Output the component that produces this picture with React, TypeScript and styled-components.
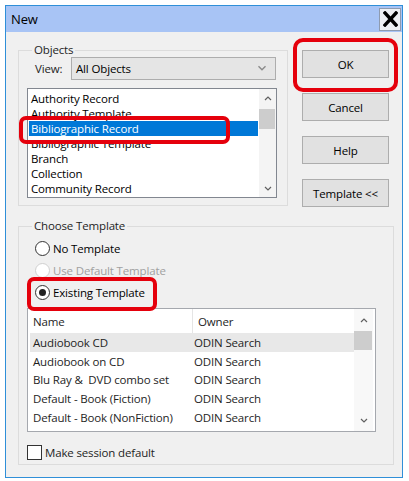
import React from 'react'
import styled, { createGlobalStyle } from 'styled-components'

const objects = [
    'Authority Record',
    'Authority Template',
    'Bibliographic Record',
    'Bibliographic Template',
    'Branch',
    'Collection',
    'Community Record',
]

const templates = [
    { name: 'Audiobook CD', owner: 'ODIN Search' },
    { name: 'Audiobook on CD', owner: 'ODIN Search' },
    { name: 'Blu Ray &  DVD combo set', owner: 'ODIN Search' },
    { name: 'Default - Book (Fiction)', owner: 'ODIN Search' },
    { name: 'Default - Book (NonFiction)', owner: 'ODIN Search' },
    { name: 'Default - Audiobook', owner: 'ODIN Search' },
]

const Chevron = ({ up, color = '#606060', w = 8 }: { up?: boolean; color?: string; w?: number }) => (
    <svg width={w} height={w / 2 + 2} viewBox="0 0 8 6">
        <polyline points={up ? '1,5 4,2 7,5' : '1,1 4,4 7,1'} fill="none" stroke={color} strokeWidth="1.2" />
    </svg>
)

const App = () => {
    return (
        <>
            <GlobalStyle />
            <Page>
                <Dialog>
                    <TitleBar>
                        <Title>New</Title>
                        <CloseButton>
                            <svg width="15" height="16" viewBox="0 0 15 16">
                                <path d="M2 2 L13 14 M13 2 L2 14" stroke="#000" strokeWidth="3.4" strokeLinecap="square" />
                            </svg>
                        </CloseButton>
                    </TitleBar>
                    <Body>
                        <TopRow>
                            <Group $width={270}>
                                <Legend>Objects</Legend>
                                <ViewRow>
                                    <ViewLabel>View:</ViewLabel>
                                    <Combo>
                                        <span>All Objects</span>
                                        <Chevron color="#8a8a8a" w={10} />
                                    </Combo>
                                </ViewRow>
                                <ListBox>
                                    <ListItems>
                                        {objects.map((o, i) => (
                                            <ListItem key={o} $selected={i === 2}>
                                                {o}
                                            </ListItem>
                                        ))}
                                    </ListItems>
                                    <ScrollBar>
                                        <ArrowCell>
                                            <Chevron up />
                                        </ArrowCell>
                                        <Thumb $top={3} $height={20} />
                                        <Spacer />
                                        <ArrowCell>
                                            <Chevron />
                                        </ArrowCell>
                                    </ScrollBar>
                                    <Highlight $left={-9} $top={27} $width={211} $height={28} $radius={7} />
                                </ListBox>
                            </Group>
                            <Buttons>
                                <Button>OK</Button>
                                <Button>Cancel</Button>
                                <Button>Help</Button>
                                <Button>Template &lt;&lt;</Button>
                                <Highlight $left={-9} $top={-12} $width={105} $height={54} $radius={10} />
                            </Buttons>
                        </TopRow>
                        <Group $width={376} $spaced>
                            <Legend>Choose Template</Legend>
                            <RadioRow>
                                <Radio />
                                <span>No Template</span>
                            </RadioRow>
                            <RadioRow $disabled>
                                <Radio $disabled />
                                <span>Use Default Template</span>
                            </RadioRow>
                            <RadioRow>
                                <Radio $checked />
                                <span>Existing Template</span>
                                <Highlight $left={0} $top={-4} $width={130} $height={34} $radius={7} />
                            </RadioRow>
                            <Table>
                                <TableArea>
                                    <HeaderRow>
                                        <HeadCell $first>Name</HeadCell>
                                        <HeadCell>Owner</HeadCell>
                                    </HeaderRow>
                                    {templates.map((t, i) => (
                                        <DataRow key={t.name} $hot={i === 0}>
                                            <NameCell>{t.name}</NameCell>
                                            <span>{t.owner}</span>
                                        </DataRow>
                                    ))}
                                </TableArea>
                                <TableScroll>
                                    <ArrowCell $h={22}>
                                        <Chevron up />
                                    </ArrowCell>
                                    <Thumb $top={0} $height={19} />
                                    <Spacer />
                                    <ArrowCell $h={20}>
                                        <Chevron />
                                    </ArrowCell>
                                </TableScroll>
                            </Table>
                            <CheckRow>
                                <CheckBox />
                                <span>Make session default</span>
                            </CheckRow>
                        </Group>
                    </Body>
                </Dialog>
            </Page>
        </>
    )
}

export default App

const GlobalStyle = createGlobalStyle`
    html, body {
        margin: 0;
        padding: 0;
        background: #ffffff;
    }
    body {
        font-family: "Open Sans", "Noto Sans", sans-serif;
        font-size: 11.5px;
        letter-spacing: -0.15px;
        color: #1a1a1a;
    }
`
const Page = styled.div`
    width: 409px;
    height: 481px;
    padding: 5px 0 0 5px;
    box-sizing: border-box;
`
const Dialog = styled.div`
    width: 398px;
    height: 473px;
    box-sizing: border-box;
    border: 1px solid #2f8fd8;
    background: #f0f0f0;
    display: flex;
    flex-direction: column;
`
const TitleBar = styled.div`
    height: 26px;
    background: #a8c4f5;
    display: flex;
    align-items: center;
    justify-content: space-between;
    padding: 0 1px 0 5px;
`
const Title = styled.div`
    font-size: 13px;
    color: #000;
`
const CloseButton = styled.div`
    width: 22px;
    height: 23px;
    box-sizing: border-box;
    border: 1px solid #8e9bb0;
    background: #eef0f4;
    display: flex;
    align-items: center;
    justify-content: center;
`
const Body = styled.div`
    padding: 10px 9px 0 12px;
    display: flex;
    flex-direction: column;
`
const TopRow = styled.div`
    display: flex;
    align-items: flex-start;
    gap: 14px;
`
const Group = styled.fieldset<{ $width: number; $spaced?: boolean }>`
    width: ${(p) => p.$width}px;
    box-sizing: border-box;
    margin: ${(p) => (p.$spaced ? '11px' : '0')} 0 0 0;
    padding: 0 ${(p) => (p.$spaced ? 17 : 10)}px ${(p) => (p.$spaced ? 4 : 7)}px 8px;
    border: 1px solid #dcdcdc;
    min-width: 0;
`
const Legend = styled.legend`
    padding: 0 2px;
    margin-left: 5px;
    line-height: 16px;
    color: #1e1e1e;
`
const ViewRow = styled.div`
    display: flex;
    align-items: center;
    margin-top: -1px;
    height: 23px;
`
const ViewLabel = styled.div`
    width: 36px;
    padding-left: 8px;
    color: #1e1e1e;
`
const Combo = styled.div`
    width: 205px;
    height: 23px;
    box-sizing: border-box;
    border: 1px solid #adadad;
    background: #e5e5e5;
    display: flex;
    align-items: center;
    justify-content: space-between;
    padding: 0 8px 0 4px;
    color: #000;
`
const ListBox = styled.div`
    position: relative;
    margin-top: 8px;
    height: 110px;
    box-sizing: border-box;
    border: 1px solid #828790;
    background: #fff;
    display: flex;
`
const ListItems = styled.div`
    flex: 1;
    overflow: hidden;
    padding: 2px 1px 0 1px;
`
const ListItem = styled.div<{ $selected?: boolean }>`
    line-height: 15px;
    padding-left: 2px;
    white-space: nowrap;
    color: ${(p) => (p.$selected ? '#fff' : '#000')};
    background: ${(p) => (p.$selected ? '#0078d7' : 'transparent')};
`
const ScrollBar = styled.div`
    width: 17px;
    background: #f4f4f4;
    display: flex;
    flex-direction: column;
`
const ArrowCell = styled.div<{ $h?: number }>`
    height: ${(p) => p.$h ?? 17}px;
    display: flex;
    align-items: center;
    justify-content: center;
`
const Thumb = styled.div<{ $top: number; $height: number }>`
    margin: ${(p) => p.$top}px 1px 0 0;
    height: ${(p) => p.$height}px;
    background: #cdcdcd;
`
const Spacer = styled.div`
    flex: 1;
`
const Highlight = styled.div<{ $left: number; $top: number; $width: number; $height: number; $radius: number }>`
    position: absolute;
    left: ${(p) => p.$left}px;
    top: ${(p) => p.$top}px;
    width: ${(p) => p.$width}px;
    height: ${(p) => p.$height}px;
    box-sizing: border-box;
    border: 4px solid #e5000c;
    border-radius: ${(p) => p.$radius}px;
    pointer-events: none;
`
const Buttons = styled.div`
    position: relative;
    margin-top: 8px;
    width: 87px;
    display: flex;
    flex-direction: column;
    gap: 15px;
`
const Button = styled.div`
    height: 28px;
    box-sizing: border-box;
    border: 1px solid #adadad;
    background: #e1e1e1;
    display: flex;
    align-items: center;
    justify-content: center;
    color: #000;
`
const RadioRow = styled.div<{ $disabled?: boolean }>`
    position: relative;
    height: 22px;
    display: flex;
    align-items: center;
    gap: 3px;
    color: ${(p) => (p.$disabled ? '#a0a0a0' : '#000')};
    &:first-of-type {
        margin-top: 3px;
    }
`
const Radio = styled.div<{ $checked?: boolean; $disabled?: boolean }>`
    width: 15px;
    height: 15px;
    margin-left: 8px;
    box-sizing: border-box;
    border-radius: 50%;
    border: 1px solid ${(p) => (p.$disabled ? '#d0d0d0' : '#333')};
    background: #fff;
    display: flex;
    align-items: center;
    justify-content: center;
    &::after {
        content: '';
        width: 7px;
        height: 7px;
        border-radius: 50%;
        background: ${(p) => (p.$checked ? '#222' : 'transparent')};
    }
`
const Table = styled.div`
    margin-top: 5px;
    height: 124px;
    box-sizing: border-box;
    border: 1px solid #a5a8ae;
    background: #fff;
    display: flex;
`
const TableArea = styled.div`
    flex: 1;
    overflow: hidden;
    padding-left: 2px;
`
const HeaderRow = styled.div`
    height: 24px;
    display: flex;
    align-items: stretch;
`
const HeadCell = styled.div<{ $first?: boolean }>`
    display: flex;
    align-items: center;
    width: ${(p) => (p.$first ? '159px' : 'auto')};
    padding-left: ${(p) => (p.$first ? 3 : 5)}px;
    border-right: ${(p) => (p.$first ? '1px solid #e5e5e5' : 'none')};
    color: #1e1e1e;
`
const DataRow = styled.div<{ $hot?: boolean }>`
    height: 18.75px;
    display: flex;
    align-items: center;
    white-space: pre;
    background: ${(p) => (p.$hot ? '#e8e8e8' : 'transparent')};
    color: #1e1e1e;
`
const NameCell = styled.span`
    width: 161px;
    padding-left: 3px;
`
const TableScroll = styled.div`
    width: 19px;
    margin-right: 2px;
    background: #f8f8f8;
    display: flex;
    flex-direction: column;
`
const CheckRow = styled.div`
    margin-top: 13px;
    display: flex;
    align-items: center;
    gap: 3px;
    color: #1e1e1e;
`
const CheckBox = styled.div`
    width: 15px;
    height: 15px;
    box-sizing: border-box;
    border: 1px solid #333;
    background: #fff;
`
